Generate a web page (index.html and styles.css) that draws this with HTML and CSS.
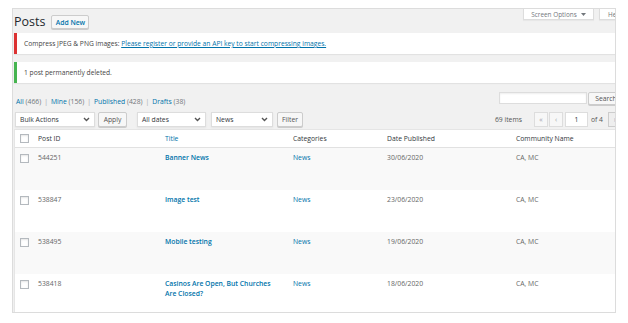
FILE: index.html
```html
<!DOCTYPE html>
<html lang="en">
<head>
<meta charset="utf-8">
<title>Posts</title>
<link rel="stylesheet" href="styles.css">
</head>
<body>
<div class="frame">
  <div class="wrap">
    <div class="top">
      <div class="title-group">
        <h1 class="page-title">Posts</h1>
        <span class="btn add-new">Add New</span>
      </div>
      <div class="meta-links">
        <div class="meta-tab screen-options">Screen Options <svg width="5" height="3" viewBox="0 0 5 3"><polygon points="0,0 5,0 2.5,3" fill="#72777c"/></svg></div>
        <div class="meta-tab help">Help <svg width="5" height="3" viewBox="0 0 5 3"><polygon points="0,0 5,0 2.5,3" fill="#72777c"/></svg></div>
      </div>
    </div>

    <div class="notice notice-error">Compress JPEG &amp; PNG images:&nbsp;<a class="link" href="#">Please register or provide an API key to start compressing images.</a></div>
    <div class="notice notice-success">1 post permanently deleted.</div>

    <div class="filters-row">
      <ul class="views">
        <li><a class="vlink" href="#">All <span class="count">(466)</span></a><span class="sep">|</span></li>
        <li><a class="vlink" href="#">Mine <span class="count">(156)</span></a><span class="sep">|</span></li>
        <li><a class="vlink" href="#">Published <span class="count">(428)</span></a><span class="sep">|</span></li>
        <li><a class="vlink" href="#">Drafts <span class="count">(38)</span></a></li>
      </ul>
      <div class="search-box">
        <span class="search-input"></span>
        <span class="btn search-btn">Search</span>
      </div>
    </div>

    <div class="tablenav">
      <div class="actions">
        <div class="select sel-bulk">Bulk Actions <svg class="chev" width="7" height="5" viewBox="0 0 7 5"><path d="M1 1l2.5 2.5L6 1" stroke="#555" stroke-width="1.4" fill="none"/></svg></div>
        <span class="btn apply">Apply</span>
        <div class="select sel-dates">All dates <svg class="chev" width="7" height="5" viewBox="0 0 7 5"><path d="M1 1l2.5 2.5L6 1" stroke="#555" stroke-width="1.4" fill="none"/></svg></div>
        <div class="select sel-cat">News <svg class="chev" width="7" height="5" viewBox="0 0 7 5"><path d="M1 1l2.5 2.5L6 1" stroke="#555" stroke-width="1.4" fill="none"/></svg></div>
        <span class="btn filter">Filter</span>
      </div>
      <div class="pagination">
        <span class="items">69 items</span>
        <span class="pbtn disabled first">&laquo;</span>
        <span class="pbtn disabled prev">&lsaquo;</span>
        <span class="page-input">1</span>
        <span class="of">of 4</span>
        <span class="pbtn next">&rsaquo;</span>
      </div>
    </div>

    <div class="table">
      <div class="row head">
        <span class="cb"></span>
        <span class="th">Post ID</span>
        <span class="th th-link">Title</span>
        <span class="th">Categories</span>
        <span class="th">Date Published</span>
        <span class="th">Community Name</span>
      </div>
      <div class="row alt">
        <span class="cb"></span>
        <span class="td">544251</span>
        <span class="td title">Banner News</span>
        <span class="td cat">News</span>
        <span class="td">30/06/2020</span>
        <span class="td">CA, MC</span>
      </div>
      <div class="row">
        <span class="cb"></span>
        <span class="td">538847</span>
        <span class="td title">Image test</span>
        <span class="td cat">News</span>
        <span class="td">23/06/2020</span>
        <span class="td">CA, MC</span>
      </div>
      <div class="row alt">
        <span class="cb"></span>
        <span class="td">538495</span>
        <span class="td title">Mobile testing</span>
        <span class="td cat">News</span>
        <span class="td">19/06/2020</span>
        <span class="td">CA, MC</span>
      </div>
      <div class="row">
        <span class="cb"></span>
        <span class="td">538418</span>
        <span class="td title">Casinos Are Open, But Churches Are Closed?</span>
        <span class="td cat">News</span>
        <span class="td">18/06/2020</span>
        <span class="td">CA, MC</span>
      </div>
    </div>
  </div>
</div>
</body>
</html>
```

FILE: styles.css
```css
html, body {
  margin: 0;
  padding: 0;
  background: #fff;
}

body {
  font-family: "Open Sans", "Noto Sans", sans-serif;
  font-size: 6.8px;
  color: #444;
}

.frame {
  margin: 8px 0 0 12px;
  width: 602px;
  height: 303px;
  border: 1px solid #dcdcdc;
  background: #f1f1f1;
  overflow: hidden;
}

.wrap {
  width: 610px;
  margin-left: 1px;
}

/* top */
.top {
  display: flex;
  justify-content: space-between;
  align-items: flex-start;
  height: 20px;
}

.title-group {
  display: flex;
  align-items: center;
  gap: 6px;
  margin-top: 6px;
}

.page-title {
  margin: 0;
  font-size: 12.5px;
  font-weight: 400;
  line-height: 14px;
  color: #23282d;
}

.btn {
  display: inline-flex;
  align-items: center;
  justify-content: center;
  box-sizing: border-box;
  border: 1px solid #ccc;
  background: #f7f7f7;
  color: #555;
  border-radius: 2px;
  box-shadow: 0 1px 0 #ccc;
  white-space: nowrap;
}

.add-new {
  width: 38px;
  height: 14px;
  color: #0073aa;
  font-weight: 600;
}

.meta-links {
  display: flex;
  gap: 5px;
  margin-right: -16px;
}

.meta-tab {
  height: 11px;
  box-sizing: border-box;
  background: #fff;
  border: 1px solid #ddd;
  border-top: 0;
  display: flex;
  align-items: center;
  justify-content: center;
  gap: 4px;
  color: #72777c;
  font-size: 6.4px;
  box-shadow: 0 1px 1px rgba(0, 0, 0, .04);
}

.screen-options { width: 71px; }
.help { width: 41px; }

/* notices */
.notice {
  background: #fff;
  border-left: 3px solid;
  height: 21px;
  box-sizing: border-box;
  display: flex;
  align-items: center;
  padding-left: 7px;
  box-shadow: 0 1px 1px rgba(0, 0, 0, .06);
  white-space: nowrap;
  font-size: 6.7px;
}

.notice-error {
  border-left-color: #dc3232;
  margin-top: 4px;
}

.notice-success {
  border-left-color: #46b450;
  margin-top: 8px;
}

.link {
  color: #0073aa;
  text-decoration: underline;
}

/* views + search */
.filters-row {
  display: flex;
  justify-content: space-between;
  align-items: flex-start;
  margin-top: 9px;
  height: 15px;
}

.views {
  list-style: none;
  margin: 5px 0 0 2px;
  padding: 0;
  display: flex;
  line-height: 10px;
}

.vlink {
  color: #0073aa;
  text-decoration: none;
}

.count { color: #72777c; }

.sep {
  color: #a0a5aa;
  margin: 0 3px;
}

.search-box {
  display: flex;
  gap: 1px;
}

.search-input {
  width: 88px;
  height: 12px;
  box-sizing: border-box;
  border: 1px solid #ddd;
  background: #fff;
  box-shadow: inset 0 1px 2px rgba(0, 0, 0, .07);
}

.search-btn {
  width: 36px;
  height: 13px;
}

/* tablenav */
.tablenav {
  display: flex;
  justify-content: space-between;
  align-items: center;
  margin-top: 5px;
  height: 15px;
}

.actions {
  display: flex;
  align-items: center;
  padding-left: 1px;
}

.select {
  height: 15px;
  box-sizing: border-box;
  border: 1px solid #ddd;
  background: #fff;
  display: flex;
  align-items: center;
  justify-content: space-between;
  padding: 0 4px;
  color: #32373c;
  box-shadow: 0 1px 2px rgba(0, 0, 0, .06);
}

.sel-bulk { width: 80px; }
.apply { width: 29px; height: 15px; margin-left: 3px; }
.sel-dates { width: 69px; margin-left: 10px; }
.sel-cat { width: 62px; margin-left: 5px; }
.filter { width: 26px; height: 15px; margin-left: 4px; }

.pagination {
  display: flex;
  align-items: center;
  margin-right: 2px;
  color: #555;
}

.items { margin-right: 12px; }

.pbtn {
  width: 14px;
  height: 15px;
  box-sizing: border-box;
  display: inline-flex;
  align-items: center;
  justify-content: center;
  border: 1px solid #ccc;
  background: #f7f7f7;
  color: #555;
  font-size: 7px;
}

.pbtn.disabled {
  border-color: #ddd;
  background: #f7f7f7;
  color: #a0a5aa;
}

.prev { margin-left: 1px; }

.page-input {
  width: 23px;
  height: 15px;
  box-sizing: border-box;
  margin-left: 2px;
  border: 1px solid #ddd;
  background: #fff;
  display: inline-flex;
  align-items: center;
  justify-content: center;
  color: #32373c;
}

.of { margin-left: 3px; margin-right: 5px; }

.next {
  background: #eee;
  color: #0073aa;
}

/* table */
.table {
  margin-top: 2px;
  background: #fff;
  border: 1px solid #e5e5e5;
  box-shadow: 0 1px 1px rgba(0, 0, 0, .04);
}

.row {
  display: grid;
  grid-template-columns: 18px 127px 128px 94px 129px 1fr;
  align-items: start;
  padding-left: 5px;
  padding-top: 5px;
  height: 42px;
  box-sizing: border-box;
  line-height: 10px;
}

.row.alt { background: #f9f9f9; }

.row.head {
  height: 18px;
  padding-top: 0;
  align-items: center;
  border-bottom: 1px solid #e1e1e1;
}

.cb {
  width: 9px;
  height: 9px;
  box-sizing: border-box;
  border: 1px solid #b4b9be;
  background: #fff;
  box-shadow: inset 0 1px 2px rgba(0, 0, 0, .1);
  margin-top: 1px;
}

.head .cb { margin-top: 0; }

.th { color: #32373c; }
.th-link { color: #0073aa; }

.td { color: #666; }

.title {
  color: #0073aa;
  font-weight: 600;
  padding-right: 10px;
}

.cat { color: #0073aa; }
```
